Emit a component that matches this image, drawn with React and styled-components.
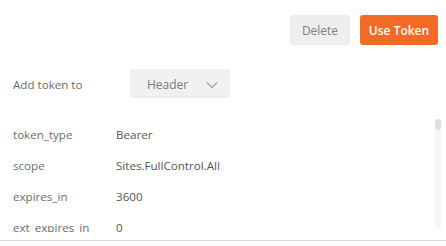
import React from 'react'
import styled, { createGlobalStyle } from 'styled-components'

const Global = createGlobalStyle`
  body {
    margin: 0;
    background: #fff;
    font-family: "Open Sans", "Liberation Sans", sans-serif;
    font-size: 11.6px;
  }
`

const Panel = styled.div`
  width: 446px;
  height: 240px;
  border-bottom: 1px solid #dcdcdc;
  overflow: hidden;
`

const Toolbar = styled.div`
  display: flex;
  justify-content: flex-end;
  gap: 10px;
  padding: 15px 8px 0 0;
`

const Button = styled.button`
  height: 30px;
  width: ${props => props.width}px;
  border: none;
  border-radius: 3px;
  padding: 0;
  font-family: inherit;
  font-size: 12px;
  background: ${props => (props.primary ? '#f26b26' : '#eeeeee')};
  color: ${props => (props.primary ? '#fff' : '#7f7f7f')};
  font-weight: ${props => (props.primary ? 600 : 400)};
`

const AddRow = styled.div`
  display: flex;
  align-items: center;
  margin-top: 24px;
  padding-left: 13px;
  height: 29px;
`

const Label = styled.div`
  width: 117px;
  padding-top: 2px;
  color: #6b6b6b;
`

const Select = styled.div`
  width: 100px;
  height: 29px;
  box-sizing: border-box;
  background: #f0f0f0;
  border-radius: 3px;
  display: flex;
  align-items: center;
  justify-content: space-between;
  padding: 2px 12px 0 17px;
  color: #7a7a7a;
  font-size: 12px;
`

const Details = styled.div`
  position: relative;
  margin-top: 19px;
  padding-top: 2px;
  box-sizing: border-box;
  height: 115px;
  overflow: hidden;
`

const Row = styled.div`
  display: flex;
  align-items: center;
  height: 31px;
  padding-left: 13px;
`

const Key = styled.div`
  width: 103px;
  color: #6b6b6b;
`

const Value = styled.div`
  color: #555;
`

const Track = styled.div`
  position: absolute;
  right: 5px;
  top: 2px;
  width: 6px;
  height: 110px;
  border-radius: 3px;
  background: #f6f6f6;
`

const Thumb = styled.div`
  width: 6px;
  height: 11px;
  border-radius: 3px;
  background: #dedede;
`

const rows = [
  ['token_type', 'Bearer'],
  ['scope', 'Sites.FullControl.All'],
  ['expires_in', '3600'],
  ['ext_expires_in', '0'],
]

export default function App() {
  return (
    <Panel>
      <Global />
      <Toolbar>
        <Button width={60}>Delete</Button>
        <Button width={78} primary>
          Use Token
        </Button>
      </Toolbar>
      <AddRow>
        <Label>Add token to</Label>
        <Select>
          <span>Header</span>
          <svg width="12" height="8" viewBox="0 0 12 8">
            <path d="M1 1.5 L6 6.5 L11 1.5" fill="none" stroke="#a8a8a8" strokeWidth="1.3" />
          </svg>
        </Select>
      </AddRow>
      <Details>
        {rows.map(([k, v]) => (
          <Row key={k}>
            <Key>{k}</Key>
            <Value>{v}</Value>
          </Row>
        ))}
        <Track>
          <Thumb />
        </Track>
      </Details>
    </Panel>
  )
}
